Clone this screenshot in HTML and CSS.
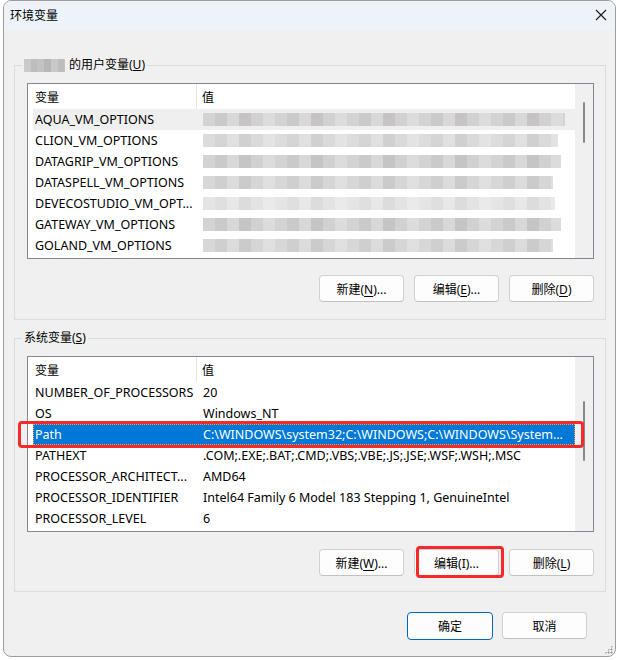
FILE: index.html
```html
<!DOCTYPE html>
<html lang="zh-CN">
<head>
    <meta charset="UTF-8">
    <title>环境变量</title>
    <link rel="stylesheet" href="styles.css">
</head>
<body>
    <div class="window">
        <div class="titlebar">
            <span class="title">环境变量</span>
            <svg class="close" width="12" height="12" viewBox="0 0 12 12">
                <path d="M1 1 L11 11 M11 1 L1 11" stroke="#1a1a1a" stroke-width="1.1" fill="none"/>
            </svg>
        </div>
        <div class="content">
            <!-- 用户变量 -->
            <fieldset class="group">
                <legend><span class="name-blur"></span>的用户变量(<u>U</u>)</legend>
                <div class="list">
                    <div class="list-main">
                        <div class="list-head">
                            <div class="head-name">变量</div>
                            <div class="head-value">值</div>
                        </div>
                        <div class="row hover"><div class="cell-name">AQUA_VM_OPTIONS</div><div class="cell-value"><span class="mosaic m1"></span></div></div>
                        <div class="row"><div class="cell-name">CLION_VM_OPTIONS</div><div class="cell-value"><span class="mosaic m2"></span></div></div>
                        <div class="row"><div class="cell-name">DATAGRIP_VM_OPTIONS</div><div class="cell-value"><span class="mosaic m3"></span></div></div>
                        <div class="row"><div class="cell-name">DATASPELL_VM_OPTIONS</div><div class="cell-value"><span class="mosaic m4"></span></div></div>
                        <div class="row"><div class="cell-name">DEVECOSTUDIO_VM_OPT...</div><div class="cell-value"><span class="mosaic m5"></span></div></div>
                        <div class="row"><div class="cell-name">GATEWAY_VM_OPTIONS</div><div class="cell-value"><span class="mosaic m3"></span></div></div>
                        <div class="row"><div class="cell-name">GOLAND_VM_OPTIONS</div><div class="cell-value"><span class="mosaic m4"></span></div></div>
                    </div>
                    <div class="scrollbar"><div class="thumb thumb-user"></div></div>
                </div>
                <div class="actions">
                    <button class="btn">新建(<u>N</u>)...</button>
                    <button class="btn">编辑(<u>E</u>)...</button>
                    <button class="btn">删除(<u>D</u>)</button>
                </div>
            </fieldset>

            <!-- 系统变量 -->
            <fieldset class="group group-system">
                <legend>系统变量(<u>S</u>)</legend>
                <div class="list">
                    <div class="list-main">
                        <div class="list-head">
                            <div class="head-name">变量</div>
                            <div class="head-value">值</div>
                        </div>
                        <div class="row"><div class="cell-name">NUMBER_OF_PROCESSORS</div><div class="cell-value">20</div></div>
                        <div class="row"><div class="cell-name">OS</div><div class="cell-value">Windows_NT</div></div>
                        <div class="row selected">
                            <div class="cell-name">Path</div>
                            <div class="cell-value">C:\WINDOWS\system32;C:\WINDOWS;C:\WINDOWS\System...</div>
                            <div class="mark mark-row"></div>
                        </div>
                        <div class="row"><div class="cell-name">PATHEXT</div><div class="cell-value">.COM;.EXE;.BAT;.CMD;.VBS;.VBE;.JS;.JSE;.WSF;.WSH;.MSC</div></div>
                        <div class="row"><div class="cell-name">PROCESSOR_ARCHITECT...</div><div class="cell-value">AMD64</div></div>
                        <div class="row"><div class="cell-name">PROCESSOR_IDENTIFIER</div><div class="cell-value">Intel64 Family 6 Model 183 Stepping 1, GenuineIntel</div></div>
                        <div class="row"><div class="cell-name">PROCESSOR_LEVEL</div><div class="cell-value">6</div></div>
                    </div>
                    <div class="scrollbar"><div class="thumb thumb-system"></div></div>
                </div>
                <div class="actions">
                    <button class="btn">新建(<u>W</u>)...</button>
                    <button class="btn btn-marked">编辑(I)...<span class="mark mark-btn"></span></button>
                    <button class="btn">删除(<u>L</u>)</button>
                </div>
            </fieldset>

            <div class="dialog-actions">
                <button class="btn btn-default">确定</button>
                <button class="btn">取消</button>
            </div>
        </div>
        <div class="grip"></div>
    </div>
</body>
</html>
```

FILE: styles.css
```css
* {
    box-sizing: border-box;
}
body {
    margin: 0;
    background: #ffffff;
    font-family: "Noto Sans", "Noto Sans CJK SC", sans-serif;
    font-size: 12px;
    color: #000;
}
.window {
    position: relative;
    width: 613px;
    height: 657px;
    margin-left: 3px;
    background: #f0f0f0;
    border: 1px solid #9c9c9c;
    border-radius: 8px;
    overflow: hidden;
}
.titlebar {
    height: 29px;
    background: #eef3f9;
    display: flex;
    align-items: center;
    justify-content: space-between;
    padding: 0 7px 2px 6px;
}
.title {
    font-size: 12px;
}
.close {
    margin-right: 1px;
}
.content {
    padding: 0 9px 0 10px;
}
.group {
    margin: 27px 0 0 0;
    padding: 10px 11px 17px 12px;
    border: 1px solid #dcdcdc;
    min-width: 0;
}
.group legend {
    padding: 0 2px;
    margin-left: -5px;
    line-height: 16px;
    display: flex;
    align-items: center;
}
.group-system {
    margin-top: 10px;
    padding-bottom: 15px;
}
.name-blur {
    display: inline-block;
    width: 41px;
    height: 13px;
    margin-right: 4px;
    background: repeating-linear-gradient(90deg, #c9c9c9 0 7px, #bdbdbd 7px 13px, #c4c2c2 13px 20px, #b8b6b6 20px 27px);
}
.list {
    display: flex;
    height: 176px;
    background: #fff;
    border: 1px solid #828790;
}
.list-main {
    flex: 1;
    min-width: 0;
    font-size: 12.5px;
}
.list-head {
    display: flex;
    height: 25px;
    align-items: stretch;
    font-size: 12px;
}
.head-name {
    width: 169px;
    padding-left: 7px;
    display: flex;
    align-items: center;
    border-right: 1px solid #e5e5e5;
}
.head-value {
    padding-left: 5px;
    display: flex;
    align-items: center;
}
.row {
    position: relative;
    display: flex;
    height: 21px;
    margin-left: 5px;
    padding-left: 2px;
    align-items: center;
    white-space: nowrap;
}
.row.hover {
    background: #efefef;
}
.row.selected {
    background: #0078d7;
    color: #fff;
    outline: 1px dotted #f2a33a;
    outline-offset: -1px;
}
.cell-name {
    width: 166px;
    overflow: hidden;
}
.cell-value {
    flex: 1;
    padding-left: 2px;
    overflow: hidden;
}
.mosaic {
    display: block;
    height: 13px;
    width: 362px;
    background: repeating-linear-gradient(90deg, #d3d3d3 0 12px, #cacaca 12px 24px, #d8d8d8 24px 36px, #c6c4c4 36px 48px, #d1d1d1 48px 60px, #dcdcdc 60px 72px);
}
.m2 { width: 355px; opacity: 0.8; }
.m3 { width: 358px; }
.m4 { width: 350px; opacity: 0.9; }
.m5 { width: 352px; opacity: 0.6; }
.scrollbar {
    width: 18px;
    background: #f0f0f0;
}
.thumb {
    width: 2px;
    margin-left: 8px;
    background: #8a8a8a;
    border-radius: 1px;
}
.thumb-user {
    margin-top: 18px;
    height: 41px;
}
.thumb-system {
    margin-top: 44px;
    height: 60px;
}
.actions {
    display: flex;
    justify-content: flex-end;
    gap: 10px;
    margin-top: 16px;
}
.group-system .actions {
    margin-top: 17px;
}
.btn {
    position: relative;
    width: 85px;
    height: 27px;
    font-family: inherit;
    font-size: 12px;
    color: #000;
    background: #fdfdfd;
    border: 1px solid #d0d0d0;
    border-bottom-color: #c2c2c2;
    border-radius: 4px;
    padding: 0;
}
.btn u {
    text-underline-offset: 2px;
}
.btn-default {
    width: 86px;
    height: 28px;
    border: 1px solid #0067c0;
}
.dialog-actions {
    display: flex;
    justify-content: flex-end;
    gap: 9px;
    margin-top: 20px;
    padding-right: 19px;
}
.mark {
    position: absolute;
    border: 3px solid #f5292a;
    border-radius: 4px;
    pointer-events: none;
}
.mark-row {
    left: -15px;
    right: -9px;
    top: -3px;
    bottom: -3px;
}
.mark-btn {
    left: 1px;
    right: -6px;
    top: -4px;
    bottom: -3px;
}
.grip {
    position: absolute;
    right: 2px;
    bottom: 2px;
    width: 9px;
    height: 9px;
    background: radial-gradient(circle, #8c8c8c 0.8px, transparent 1.2px) 0 0 / 3px 3px;
    clip-path: polygon(100% 0, 100% 100%, 0 100%);
}
```
